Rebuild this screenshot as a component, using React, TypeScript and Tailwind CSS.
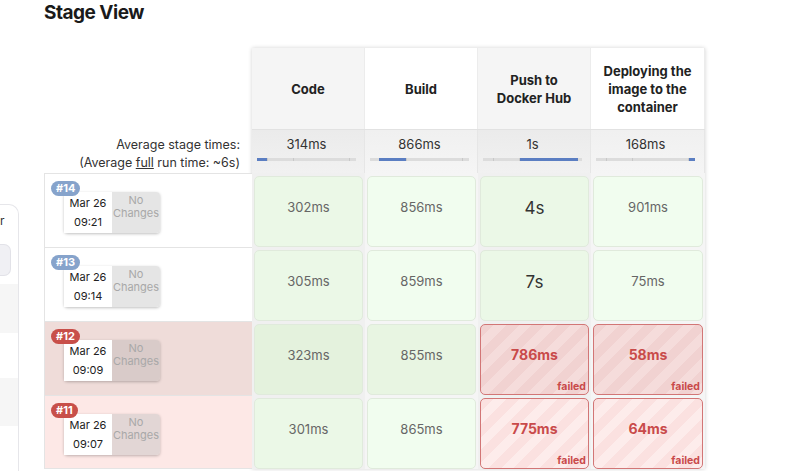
import React from "react";

type Cell = { t: string; kind: "ok" | "big" | "fail" };
type Run = { id: string; date: string; time: string; status: "ok" | "fail"; rowBg: string; cells: Cell[]; dark?: boolean; light?: boolean };

const runs: Run[] = [
  { id: "#14", date: "Mar 26", time: "09:21", status: "ok", rowBg: "bg-white", cells: [{ t: "302ms", kind: "ok" }, { t: "856ms", kind: "ok" }, { t: "4s", kind: "big" }, { t: "901ms", kind: "ok" }] },
  { id: "#13", date: "Mar 26", time: "09:14", status: "ok", rowBg: "bg-white", cells: [{ t: "305ms", kind: "ok" }, { t: "859ms", kind: "ok" }, { t: "7s", kind: "big" }, { t: "75ms", kind: "ok" }] },
  { id: "#12", date: "Mar 26", time: "09:09", status: "fail", rowBg: "bg-[#efdcd9]", dark: true, cells: [{ t: "323ms", kind: "ok" }, { t: "855ms", kind: "ok" }, { t: "786ms", kind: "fail" }, { t: "58ms", kind: "fail" }] },
  { id: "#11", date: "Mar 26", time: "09:07", status: "fail", rowBg: "bg-[#fde8e6]", light: true, cells: [{ t: "301ms", kind: "ok" }, { t: "865ms", kind: "ok" }, { t: "775ms", kind: "fail" }, { t: "64ms", kind: "fail" }] },
];

const stages = [
  { name: ["Code"], avg: "314ms", off: 0, w: 10, alt: true },
  { name: ["Build"], avg: "866ms", off: 9, w: 27, alt: false },
  { name: ["Push to", "Docker Hub"], avg: "1s", off: 37, w: 58, alt: true },
  { name: ["Deploying the", "image to the", "container"], avg: "168ms", off: 93, w: 6, alt: false },
];

function Bar({ off, w }: { off: number; w: number }) {
  return (
    <div className="relative h-[3px] w-[99px] bg-[#dcdcdc]">
      <div className="absolute top-0 left-[10px] h-[3px] w-[1px] bg-[#c8c8c8]" />
      <div className="absolute top-0 left-[36px] h-[3px] w-[1px] bg-[#c8c8c8]" />
      <div className="absolute top-0 left-[92px] h-[3px] w-[1px] bg-[#c8c8c8]" />
      <div className="absolute top-0 h-[3px] bg-[#5b7ec2]" style={{ left: off, width: w }} />
    </div>
  );
}

function StageCell({ c, alt, run }: { c: Cell; alt: boolean; run: Run }) {
  if (c.kind === "fail") {
    const stripes = run.light
      ? "bg-[repeating-linear-gradient(135deg,#fbe1e0_0px,#fbe1e0_9px,#fdeceb_9px,#fdeceb_18px)]"
      : "bg-[repeating-linear-gradient(135deg,#f1d2d1_0px,#f1d2d1_9px,#f5dcdb_9px,#f5dcdb_18px)]";
    return (
      <div className={`relative h-full w-full rounded-[5px] border border-[#d27676] ${stripes} flex items-center justify-center`}>
        <span className="-mt-[10px] text-[14px] font-bold text-[#c94a4a]">{c.t}</span>
        <span className="absolute right-[2px] bottom-[1px] text-[10.5px] leading-[12px] font-bold text-[#c94a4a]">failed</span>
      </div>
    );
  }
  const bg = run.dark ? (alt ? "bg-[#e4f2dd]" : "bg-[#e8f5e2]") : alt ? "bg-[#ebf8e7]" : "bg-[#f1fdef]";
  return (
    <div className={`h-full w-full rounded-[5px] border border-[#e0eadc] ${bg} flex items-center justify-center`}>
      {c.kind === "big" ? (
        <span className="-mt-[5px] text-[17px] text-[#333]">{c.t}</span>
      ) : (
        <span className="-mt-[7px] text-[13px] text-[#666]">{c.t}</span>
      )}
    </div>
  );
}

export default function App() {
  return (
    <div className="w-[800px] h-[471px] overflow-hidden bg-white flex text-[#333]" style={{ fontFamily: "Inter, 'Liberation Sans', sans-serif" }}>
      {/* partial sidebar */}
      <div className="mt-[204px] w-[19px] shrink-0 h-[300px] border-r border-t border-[#e6e6ea] rounded-tr-[10px] bg-white flex flex-col">
        <div className="h-[39px] pt-[9px] text-[12px] leading-[14px] text-[#333]">r</div>
        <div className="h-[32px] w-[11px] rounded-r-[7px] bg-[#f0f0f4] border border-l-0 border-[#e2e2e8]" />
        <div className="h-[8px]" />
        <div className="h-[49px] bg-[#f6f6f6]" />
        <div className="h-[45px] bg-white" />
        <div className="h-[48px] bg-[#f6f6f6]" />
        <div className="flex-1 bg-white" />
      </div>
      <div className="ml-[25px] flex flex-col">
        <h2 className="text-[19px] leading-[24px] font-bold text-[#1a1a1a] mt-[1px] tracking-[-0.5px]">Stage View</h2>
        <div className="mt-[23px] flex">
          {/* left column */}
          <div className="w-[208px] flex flex-col">
            <div className="h-[81px]" />
            <div className="h-[44px] pr-[12px] pt-[7px] flex flex-col items-end text-[12.5px] leading-[18px] text-[#333]">
              <div>Average stage times:</div>
              <div>
                (Average <span className="underline">full</span> run time: ~6s)
              </div>
            </div>
            {runs.map((r, i) => (
              <div key={r.id} className={`h-[74px] border-l border-t border-[#e4e4e4] ${r.rowBg} ${i === 3 ? "border-b" : ""} relative`}>
                <div className="absolute left-[19px] top-[18px] flex shadow-[0_1px_3px_rgba(0,0,0,0.25)] rounded-[4px]">
                  <div className="w-[48px] h-[41px] bg-white flex flex-col items-center justify-center text-[11px] leading-[19px] text-[#222]">
                    <div>{r.date}</div>
                    <div>{r.time}</div>
                  </div>
                  <div className={`w-[48px] h-[41px] rounded-r-[4px] ${r.status === "fail" ? (r.dark ? "bg-[#d9cbc9]" : "bg-[#e2d6d5]") : "bg-[#e5e5e5]"} flex flex-col items-center pt-[2px] text-[11px] leading-[13px] text-[#a8a8a8]`}>
                    <div>No</div>
                    <div>Changes</div>
                  </div>
                </div>
                <div className={`absolute left-[6px] top-[7px] h-[15px] px-[5px] rounded-full ${r.status === "fail" ? "bg-[#c84f49]" : "bg-[#86a3cb]"} text-white text-[11px] leading-[15px] font-bold`}>
                  {r.id}
                </div>
              </div>
            ))}
          </div>
          {/* stages block */}
          <div className="flex flex-col shadow-[0_0_4px_rgba(0,0,0,0.18)]">
            <div className="flex h-[81px]">
              {stages.map((s, i) => (
                <div key={i} className={`${i === 3 ? "w-[114px]" : "w-[113px]"} h-full ${s.alt ? "bg-[#f5f5f5]" : "bg-white"} border-r border-[#ececec] flex flex-col items-center justify-center text-[13px] leading-[18px] font-bold text-[#222] text-center`}>
                  {s.name.map((n) => (
                    <div key={n}>{n}</div>
                  ))}
                </div>
              ))}
            </div>
            <div className="flex h-[44px] border-t border-[#e2e2e2] shadow-[inset_0_-2px_2px_rgba(0,0,0,0.06)]">
              {stages.map((s, i) => (
                <div key={i} className={`${i === 3 ? "w-[114px]" : "w-[113px]"} h-full ${s.alt ? "bg-[linear-gradient(#ebebeb,#f1f1f1)]" : "bg-[linear-gradient(#f0f0f0,#f5f5f5)]"} border-r border-[#e6e6e6] flex flex-col pl-[5px] pt-[5px]`}>
                  <div className="w-[99px] text-center text-[13px] leading-[18px] text-[#333]">{s.avg}</div>
                  <div className="mt-[5px]">
                    <Bar off={s.off} w={s.w} />
                  </div>
                </div>
              ))}
            </div>
            {runs.map((r) => (
              <div key={r.id} className="flex h-[74px]">
                {r.cells.map((c, i) => (
                  <div key={i} className={`${i === 3 ? "w-[114px]" : "w-[113px]"} h-full ${stages[i].alt ? "bg-[#f0f0f0]" : "bg-[#f5f5f5]"} px-[2px] pt-[3px] pb-[0px]`}>
                    <StageCell c={c} alt={stages[i].alt} run={r} />
                  </div>
                ))}
              </div>
            ))}
          </div>
        </div>
      </div>
    </div>
  );
}
